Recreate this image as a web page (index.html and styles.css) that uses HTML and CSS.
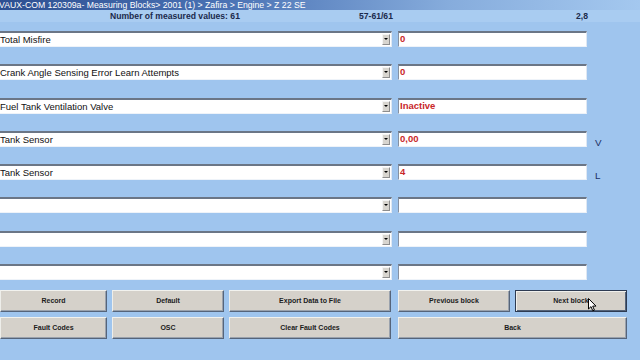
FILE: index.html
```html
<!DOCTYPE html>
<html>

	<head>
		<meta charset="UTF-8">
		<title>Measuring Blocks</title>
		<link rel="stylesheet" href="styles.css">
	</head>

	<body>
		<div class="window">
			<div class="titlebar">VAUX-COM 120309a- Measuring Blocks&gt; 2001 (1) &gt; Zafira &gt; Engine &gt; Z 22 SE</div>
			<div class="info">
				<span class="count">Number of measured values: 61</span>
				<span class="range">57-61/61</span>
				<span class="ver">2,8</span>
			</div>

			<div class="rows">
				<div class="row">
					<div class="select"><span>Total Misfire</span><i class="arrow"></i></div>
					<div class="value">0</div>
					<div class="unit"></div>
				</div>
				<div class="row">
					<div class="select"><span>Crank Angle Sensing Error Learn Attempts</span><i class="arrow"></i></div>
					<div class="value">0</div>
					<div class="unit"></div>
				</div>
				<div class="row">
					<div class="select"><span>Fuel Tank Ventilation Valve</span><i class="arrow"></i></div>
					<div class="value">Inactive</div>
					<div class="unit"></div>
				</div>
				<div class="row">
					<div class="select"><span>Tank Sensor</span><i class="arrow"></i></div>
					<div class="value">0,00</div>
					<div class="unit">V</div>
				</div>
				<div class="row">
					<div class="select"><span>Tank Sensor</span><i class="arrow"></i></div>
					<div class="value">4</div>
					<div class="unit">L</div>
				</div>
				<div class="row">
					<div class="select"><span></span><i class="arrow"></i></div>
					<div class="value"></div>
					<div class="unit"></div>
				</div>
				<div class="row">
					<div class="select"><span></span><i class="arrow"></i></div>
					<div class="value"></div>
					<div class="unit"></div>
				</div>
				<div class="row">
					<div class="select"><span></span><i class="arrow"></i></div>
					<div class="value"></div>
					<div class="unit"></div>
				</div>
			</div>

			<div class="buttons">
				<div class="group left">
					<button>Record</button>
					<button>Default</button>
					<button>Export Data to File</button>
					<button>Fault Codes</button>
					<button>OSC</button>
					<button>Clear Fault Codes</button>
				</div>
				<div class="group right">
					<button>Previous block</button>
					<button class="focus">Next block
						<svg class="cursor" width="9" height="14" viewBox="0 0 9 14">
							<path d="M0.5 0.5 L0.5 11 L3 8.6 L4.8 12.8 L6.4 12.1 L4.7 8.1 L8 8.1 Z" fill="#fff" stroke="#000" stroke-width="1"/>
						</svg>
					</button>
					<button class="wide">Back</button>
				</div>
			</div>
		</div>
	</body>

</html>
```

FILE: styles.css
```css
html,
body {
	margin: 0;
	padding: 0;
}

body {
	width: 640px;
	height: 360px;
	overflow: hidden;
	background-color: #9fc5ee;
	font-family: "Liberation Sans", Arial, sans-serif;
}

.window {
	width: 640px;
}

.titlebar {
	height: 10px;
	line-height: 10px;
	text-indent: -1px;
	font-size: 8.7px;
	color: #fff;
	white-space: nowrap;
	overflow: hidden;
	background: linear-gradient(to right, #2d4f91 0%, #4a72b4 35%, #86acdc 70%, #a4c8ef 100%);
}

.info {
	display: flex;
	height: 12px;
	line-height: 12px;
	font-size: 8.6px;
	font-weight: bold;
	color: #1b2a4c;
	background-color: #a9ccf1;
}

.info .count {
	margin-left: 110px;
	width: 249px;
}

.info .range {
	width: 217px;
}

.rows {
	display: flex;
	flex-direction: column;
	gap: 17.25px;
	padding-top: 9px;
}

.row {
	display: flex;
	height: 16px;
}

.select,
.value {
	box-sizing: border-box;
	height: 16px;
	background-color: #fff;
	border-top: 2px solid #6b7686;
	border-left: 1px solid #8591a3;
	border-right: 1px solid #dfe8f3;
	border-bottom: 1px solid #eef3f9;
}

.select {
	display: flex;
	align-items: center;
	width: 392px;
	border-left: none;
	font-size: 9.5px;
	color: #111;
}

.select span {
	flex: 1;
	white-space: nowrap;
}

.arrow {
	position: relative;
	width: 8px;
	height: 11px;
	margin-right: 1px;
	box-sizing: border-box;
	background-color: #d8d5cf;
	border: 1px solid #8d8d8d;
	border-top-color: #f4f4f4;
	border-left-color: #f4f4f4;
}

.arrow:after {
	content: '';
	position: absolute;
	left: 1px;
	top: 3px;
	border-left: 2px solid transparent;
	border-right: 2px solid transparent;
	border-top: 2px solid #000;
}

.value {
	width: 189px;
	margin-left: 6px;
	padding-left: 1px;
	line-height: 12px;
	font-size: 9.5px;
	font-weight: bold;
	color: #c8262a;
}

.unit {
	margin-left: 8px;
	padding-top: 6px;
	font-size: 9.8px;
	color: #1b2f63;
}

.buttons {
	display: flex;
	gap: 7px;
	margin-top: 10px;
}

.group {
	display: grid;
	gap: 5px;
	grid-auto-rows: 22px;
}

.left {
	width: 391px;
	grid-template-columns: 107px 112px 162px;
}

.right {
	width: 229px;
	grid-template-columns: 112px 112px;
}

.right .wide {
	grid-column: span 2;
}

button {
	position: relative;
	margin: 0;
	padding: 0;
	font-family: "Liberation Sans", Arial, sans-serif;
	font-size: 7px;
	font-weight: bold;
	color: #1c1c1c;
	background-color: #d5d1ca;
	border: 1px solid;
	border-color: #f2f2ee #55647a #55647a #eeeeea;
	box-shadow: inset -1px -1px 0 #9aa2ad;
}

button.focus {
	border: 1px solid #2d3b52;
	box-shadow: inset 1px 1px 0 #f0f0ec, inset -1px -1px 0 #55647a;
}

.cursor {
	position: absolute;
	left: 72px;
	top: 7px;
}
```
